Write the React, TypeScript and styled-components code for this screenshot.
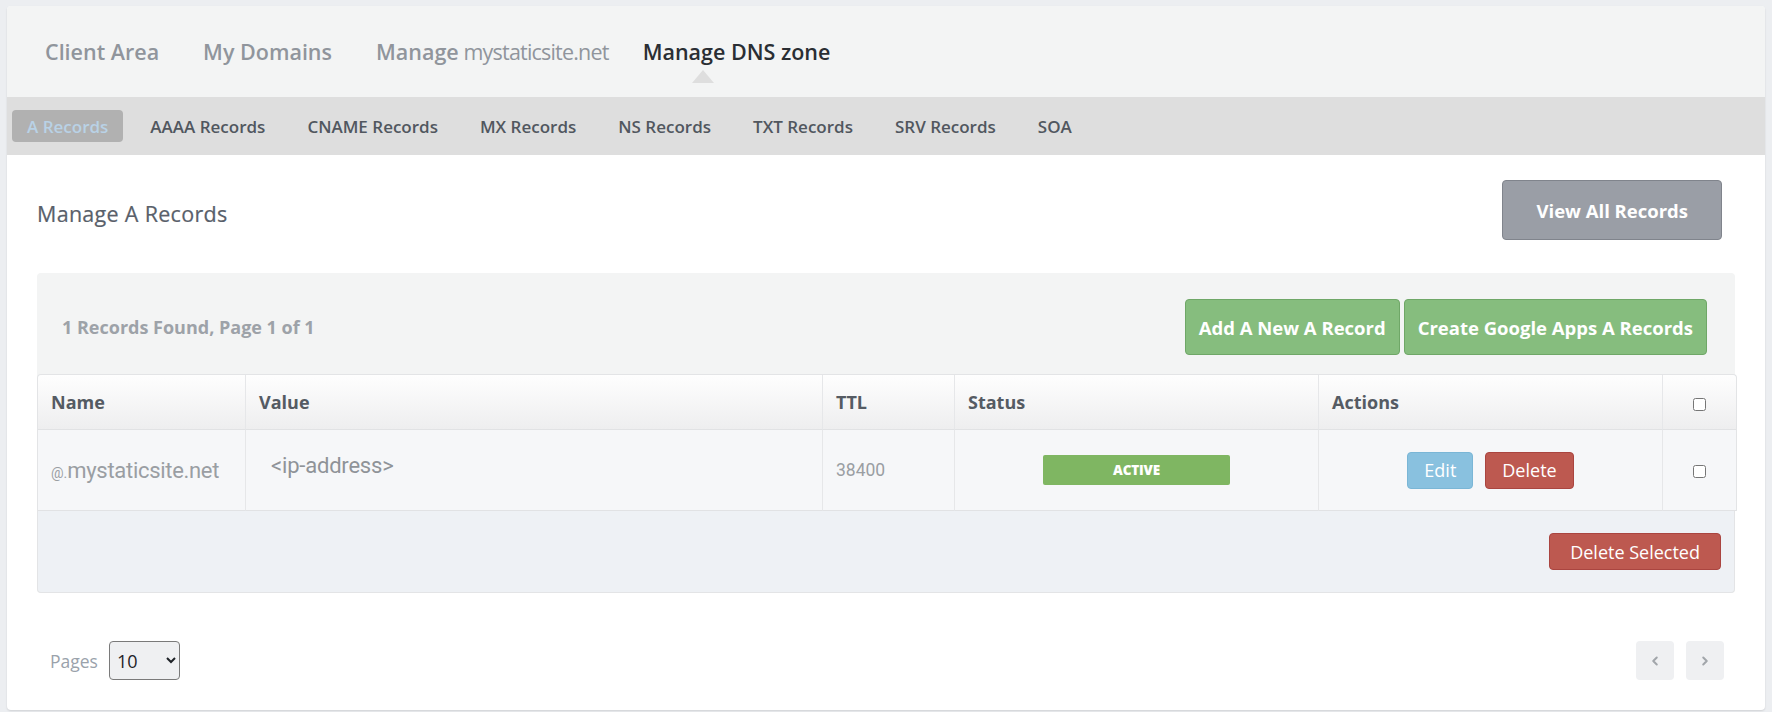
import React from "react";
import styled, { createGlobalStyle } from "styled-components";
import { ChevronLeft, ChevronRight } from "lucide-react";

const GlobalStyle = createGlobalStyle`
  html, body {
    margin: 0;
    padding: 0;
    background: #eceef1;
  }
  body {
    font-family: "Open Sans", Arial, sans-serif;
  }
`;

const crumbs = [
  { label: "Client Area" },
  { label: "My Domains" },
  { label: "Manage", suffix: "mystaticsite.net" },
  { label: "Manage DNS zone", active: true },
];

const tabs = [
  "A Records",
  "AAAA Records",
  "CNAME Records",
  "MX Records",
  "NS Records",
  "TXT Records",
  "SRV Records",
  "SOA",
];

export default function App() {
  return (
    <>
      <GlobalStyle />
      <StyledPage>
        <StyledCard>
          <StyledHeader>
            {crumbs.map((c) => (
              <StyledCrumb key={c.label + (c.suffix || "")} $active={!!c.active}>
                {c.label}
                {c.suffix && <StyledCrumbSuffix> {c.suffix}</StyledCrumbSuffix>}
              </StyledCrumb>
            ))}
          </StyledHeader>

          <StyledTabBar>
            {tabs.map((t, i) => (
              <StyledTab key={t} $active={i === 0}>
                {t}
              </StyledTab>
            ))}
          </StyledTabBar>

          <StyledBody>
            <StyledTitleRow>
              <StyledTitle>Manage A Records</StyledTitle>
              <StyledButton $variant="grey">View All Records</StyledButton>
            </StyledTitleRow>

            <StyledPanel>
              <StyledPanelTop>
                <StyledFound>1 Records Found, Page 1 of 1</StyledFound>
                <StyledButtonGroup>
                  <StyledButton $variant="green">Add A New A Record</StyledButton>
                  <StyledButton $variant="green">
                    Create Google Apps A Records
                  </StyledButton>
                </StyledButtonGroup>
              </StyledPanelTop>

              <StyledTable>
                <colgroup>
                  <col style={{ width: 208 }} />
                  <col style={{ width: 577 }} />
                  <col style={{ width: 132 }} />
                  <col style={{ width: 364 }} />
                  <col style={{ width: 344 }} />
                  <col style={{ width: 73 }} />
                </colgroup>
                <thead>
                  <tr>
                    <StyledTh>Name</StyledTh>
                    <StyledTh>Value</StyledTh>
                    <StyledTh>TTL</StyledTh>
                    <StyledTh>Status</StyledTh>
                    <StyledTh>Actions</StyledTh>
                    <StyledTh $center>
                      <StyledCheckbox type="checkbox" />
                    </StyledTh>
                  </tr>
                </thead>
                <tbody>
                  <tr>
                    <StyledTd>
                      <StyledHost>
                        <small>@.</small>mystaticsite.net
                      </StyledHost>
                    </StyledTd>
                    <StyledTd>
                      <StyledValue>&lt;ip-address&gt;</StyledValue>
                    </StyledTd>
                    <StyledTd>
                      <StyledTtl>38400</StyledTtl>
                    </StyledTd>
                    <StyledTd $center>
                      <StyledLabel>ACTIVE</StyledLabel>
                    </StyledTd>
                    <StyledTd $center>
                      <StyledActions>
                        <StyledSmallButton $variant="blue">Edit</StyledSmallButton>
                        <StyledSmallButton $variant="red">Delete</StyledSmallButton>
                      </StyledActions>
                    </StyledTd>
                    <StyledTd $center>
                      <StyledCheckbox type="checkbox" />
                    </StyledTd>
                  </tr>
                </tbody>
              </StyledTable>

              <StyledPanelFooter>
                <StyledSmallButton $variant="red" $wide>
                  Delete Selected
                </StyledSmallButton>
              </StyledPanelFooter>
            </StyledPanel>
          </StyledBody>

          <StyledPager>
            <StyledPagesLeft>
              <StyledPagesLabel>Pages</StyledPagesLabel>
              <StyledSelect defaultValue="10">
                <option value="10">10</option>
                <option value="25">25</option>
                <option value="50">50</option>
              </StyledSelect>
            </StyledPagesLeft>
            <StyledPagesRight>
              <StyledPageBtn>
                <ChevronLeft size={14} strokeWidth={3.5} />
              </StyledPageBtn>
              <StyledPageBtn>
                <ChevronRight size={14} strokeWidth={3.5} />
              </StyledPageBtn>
            </StyledPagesRight>
          </StyledPager>
        </StyledCard>
      </StyledPage>
    </>
  );
}

const StyledPage = styled.div`
  padding: 6px 7px 3px;
`;

const StyledCard = styled.div`
  background: #fff;
  border-radius: 4px;
  box-shadow: 0 1px 2px rgba(0, 0, 0, 0.12);
  overflow: hidden;
`;

const StyledHeader = styled.div`
  height: 91px;
  background: #f3f4f4;
  display: flex;
  align-items: center;
  gap: 44px;
  padding-left: 38px;
  box-sizing: border-box;
`;

const StyledCrumb = styled.div<{ $active: boolean }>`
  position: relative;
  font-size: 21.5px;
  font-weight: 600;
  color: ${(p) => (p.$active ? "#2a2e33" : "#90959c")};
  margin-left: ${(p) => (p.$active ? "-10px" : "0")};

  ${(p) =>
    p.$active &&
    `
    &::after {
      content: "";
      position: absolute;
      left: 60px;
      top: 33px;
      transform: translateX(-50%);
      border-left: 11px solid transparent;
      border-right: 11px solid transparent;
      border-bottom: 13px solid #dedede;
    }
  `}
`;

const StyledCrumbSuffix = styled.span`
  font-weight: 400;
  letter-spacing: -0.8px;
`;

const StyledTabBar = styled.div`
  height: 58px;
  background: #dedede;
  display: flex;
  align-items: center;
  gap: 12px;
  padding-left: 5px;
  box-sizing: border-box;
`;

const StyledTab = styled.div<{ $active: boolean }>`
  height: 32px;
  display: flex;
  align-items: center;
  padding: 0 15px;
  border-radius: 4px;
  font-size: 17px;
  font-weight: 600;
  color: ${(p) => (p.$active ? "#b9d2e6" : "#51575f")};
  background: ${(p) => (p.$active ? "#b1b1b1" : "transparent")};
`;

const StyledBody = styled.div`
  padding: 25px 30px 0;
`;

const StyledTitleRow = styled.div`
  display: flex;
  align-items: center;
  justify-content: space-between;
  padding-right: 13px;
  margin-bottom: 33px;
`;

const StyledTitle = styled.h2`
  margin: 6px 0 0;
  font-size: 21.5px;
  font-weight: 500;
  letter-spacing: 0.3px;
  color: #59606a;
  -webkit-text-stroke: 0.2px #59606a;
`;

const buttonColors = {
  grey: { bg: "#9a9ea6", border: "#80848c" },
  green: { bg: "#86bd7e", border: "#6fa767" },
  blue: { bg: "#89c1df", border: "#7ab6d6" },
  red: { bg: "#bd5950", border: "#aa4540" },
};

type Variant = keyof typeof buttonColors;

const StyledButton = styled.button<{ $variant: Variant }>`
  font-family: "Open Sans", Arial, sans-serif;
  font-size: 18.5px;
  font-weight: 700;
  color: #fff;
  background: ${(p) => buttonColors[p.$variant].bg};
  border: 1px solid ${(p) => buttonColors[p.$variant].border};
  border-radius: 4px;
  height: ${(p) => (p.$variant === "grey" ? "60px" : "56px")};
  padding: ${(p) => (p.$variant === "grey" ? "0 33px" : "0 13px")};
  cursor: pointer;
`;

const StyledButtonGroup = styled.div`
  display: flex;
  gap: 4px;
`;

const StyledPanel = styled.div`
  background: #f3f4f4;
  border-radius: 4px;
`;

const StyledPanelTop = styled.div`
  display: flex;
  align-items: center;
  justify-content: space-between;
  padding: 26px 28px 19px 25px;
`;

const StyledFound = styled.div`
  font-size: 18px;
  font-weight: 700;
  color: #9da2a8;
`;

const StyledTable = styled.table`
  width: 100%;
  border-collapse: separate;
  border-spacing: 0;
  table-layout: fixed;
  border: 1px solid #e3e4e6;
  border-bottom: none;
  border-radius: 4px 4px 0 0;
  background: #f6f7f9;
`;

const StyledTh = styled.th<{ $center?: boolean }>`
  height: 54px;
  padding: 0 13px;
  text-align: ${(p) => (p.$center ? "center" : "left")};
  font-size: 18px;
  font-weight: 700;
  color: #555b63;
  background: linear-gradient(#fefefe, #eeeeef);
  border-bottom: 1px solid #e1e2e4;
  border-right: 1px solid #e6e7e9;

  &:first-child {
    border-top-left-radius: 4px;
  }
  &:last-child {
    border-right: none;
    border-top-right-radius: 4px;
  }
`;

const StyledTd = styled.td<{ $center?: boolean }>`
  height: 80px;
  padding: 0 13px;
  text-align: ${(p) => (p.$center ? "center" : "left")};
  vertical-align: middle;
  border-bottom: 1px solid #e1e2e4;
  border-right: 1px solid #e6e7e9;

  &:last-child {
    border-right: none;
  }
`;

const StyledHost = styled.span`
  font-family: Roboto, Arial, sans-serif;
  font-size: 22px;
  color: #9a9ea3;
  letter-spacing: -0.3px;

  small {
    font-size: 14px;
    letter-spacing: 0;
  }
`;

const StyledValue = styled.div`
  font-family: Roboto, Arial, sans-serif;
  font-size: 22px;
  color: #8f9398;
  padding-left: 12px;
  margin-top: -9px;
  letter-spacing: -0.2px;
`;

const StyledTtl = styled.span`
  font-family: Roboto, Arial, sans-serif;
  font-size: 17.5px;
  color: #9a9ea3;
`;

const StyledLabel = styled.span`
  display: inline-flex;
  align-items: center;
  justify-content: center;
  width: 187px;
  height: 30px;
  border-radius: 2px;
  background: #7fb662;
  color: #fff;
  font-size: 13.5px;
  font-weight: 800;
  letter-spacing: -0.2px;
`;

const StyledActions = styled.div`
  display: inline-flex;
  gap: 12px;
`;

const StyledSmallButton = styled.button<{ $variant: Variant; $wide?: boolean }>`
  font-family: "Open Sans", Arial, sans-serif;
  font-size: 18px;
  font-weight: 400;
  color: #fff;
  background: ${(p) => buttonColors[p.$variant].bg};
  border: 1px solid ${(p) => buttonColors[p.$variant].border};
  border-radius: 4px;
  height: 37px;
  padding: ${(p) => (p.$wide ? "0 20px" : "0 16px")};
  cursor: pointer;
`;

const StyledCheckbox = styled.input`
  width: 13px;
  height: 13px;
  margin: 0;
  vertical-align: middle;
`;

const StyledPanelFooter = styled.div`
  height: 82px;
  box-sizing: border-box;
  background: #eef1f5;
  border: 1px solid #e3e4e6;
  border-top: none;
  border-radius: 0 0 4px 4px;
  display: flex;
  justify-content: flex-end;
  align-items: flex-start;
  padding: 22px 13px 0;
`;

const StyledPager = styled.div`
  display: flex;
  align-items: center;
  justify-content: space-between;
  padding: 48px 41px 30px 43px;
`;

const StyledPagesLeft = styled.div`
  display: flex;
  align-items: center;
  gap: 11px;
`;

const StyledPagesLabel = styled.span`
  font-size: 17.5px;
  color: #9aa2ab;
`;

const StyledSelect = styled.select`
  width: 71px;
  height: 39px;
  font-family: "Open Sans", Arial, sans-serif;
  font-size: 18px;
  color: #1f2328;
  background: #eff0f2;
  border: 1px solid #7a7a7a;
  border-radius: 4px;
  padding: 0 3px;
`;

const StyledPagesRight = styled.div`
  display: flex;
  gap: 12px;
`;

const StyledPageBtn = styled.button`
  width: 38px;
  height: 39px;
  border: none;
  border-radius: 4px;
  background: #eff0f2;
  color: #a2a6ab;
  display: flex;
  align-items: center;
  justify-content: center;
  padding: 0;
`;
